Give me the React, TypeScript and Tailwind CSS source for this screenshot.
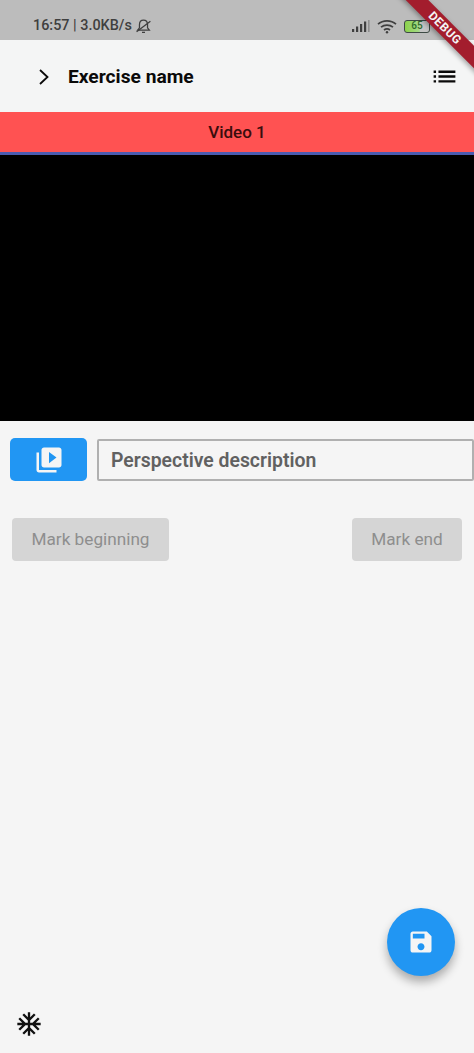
import React from 'react';

const Icon = ({ d, className }: { d: string; className: string }) => (
  <svg viewBox="0 0 24 24" fill="currentColor" className={className}>
    <path d={d} />
  </svg>
);

const LIST = 'M3 13h2v-2H3v2zm0 4h2v-2H3v2zm0-8h2V7H3v2zm4 4h14v-2H7v2zm0 4h14v-2H7v2zM7 7v2h14V7H7z';
const VIDEO_LIBRARY =
  'M4 6H2v14c0 1.1.9 2 2 2h14v-2H4V6zm16-4H8c-1.1 0-2 .9-2 2v12c0 1.1.9 2 2 2h12c1.1 0 2-.9 2-2V4c0-1.1-.9-2-2-2zm-8 12.5v-9l6 4.5-6 4.5z';
const SAVE =
  'M17 3H5c-1.11 0-2 .9-2 2v14c0 1.1.89 2 2 2h14c1.1 0 2-.9 2-2V7l-4-4zm-5 16c-1.66 0-3-1.34-3-3s1.34-3 3-3 3 1.34 3 3-1.34 3-3 3zm3-10H5V5h10v4z';
const SNOWFLAKE =
  'M22 11h-4.17l3.24-3.24-1.41-1.42L15 11h-2V9l4.66-4.66-1.42-1.41L13 6.17V2h-2v4.17L7.76 2.93 6.34 4.34 11 9v2H9L4.34 6.34 2.93 7.76 6.17 11H2v2h4.17l-3.24 3.24 1.41 1.42L9 13h2v2l-4.66 4.66 1.42 1.41L11 17.83V22h2v-4.17l3.24 3.24 1.42-1.41L13 15v-2h2l4.66 4.66 1.41-1.42L17.83 13H22z';

const StatusBar = () => (
  <div className="flex h-10 items-center bg-[#bcbcbc] pl-[33px] pr-[44px] pt-[12px] text-[#3f3f3f]">
    <span className="text-[14.4px] font-medium leading-none">16:57 | 3.0KB/s</span>
    {/* muted bell */}
    <svg viewBox="0 0 16 16" fill="none" stroke="currentColor" strokeWidth="1.2" className="ml-[3px] h-[17px] w-[17px]">
      <path d="M8 2c-2.600 0-3.800 2-3.800 4.300v3L2.500 11.500h11l-1.700-2.200v-3C11.800 4 10.600 2 8 2z" />
      <path d="M6.600 13.500h2.800M1.500 13 14.500 3" />
    </svg>
    <div className="ml-auto flex items-center">
      {/* signal */}
      <svg viewBox="0 0 18 12" className="h-3 w-[18px]" fill="currentColor">
        <rect x="0" y="9" width="2.2" height="3" />
        <rect x="4" y="6.500" width="2.2" height="5.500" />
        <rect x="8" y="4" width="2.2" height="8" />
        <rect x="12" y="1.500" width="2.2" height="10.500" />
        <rect x="16" y="0" width="1.600" height="12" fill="#8f8f8f" />
      </svg>
      {/* wifi */}
      <svg viewBox="0 0 20 15" fill="none" stroke="currentColor" strokeWidth="1.7" className="ml-[7px] h-[15px] w-5">
        <path d="M1 5.200c5-4.400 13-4.400 18 0" />
        <path d="M4 8.200c3.300-2.800 8.700-2.800 12 0" />
        <path d="M7 11c1.700-1.300 4.300-1.300 6 0" />
        <circle cx="10" cy="13.300" r="1.200" fill="currentColor" stroke="none" />
      </svg>
      {/* battery */}
      <div className="ml-[7px] flex h-[13px] w-[26px] items-center justify-center rounded-[3px] border-[1.5px] border-[#3d4a44] bg-[linear-gradient(90deg,#8bd24a_0%,#a5d98a_60%,#c4c4c4_62%)] text-[10px] font-medium leading-none text-[#2f6b2a]">
        65
      </div>
    </div>
  </div>
);

const AppBar = () => (
  <div className="flex h-[72px] items-center bg-[#f4f5f5] pl-[39px] pr-[15px] pt-[1px]">
    <svg viewBox="0 0 10 16" fill="none" stroke="#0a0a0a" strokeWidth="1.8" className="h-4 w-[10px]">
      <path d="M1 1l7.500 7L1 15" />
    </svg>
    <span className="ml-[19px] text-[19.2px] font-bold leading-none text-[#0a0a0a]">Exercise name</span>
    <Icon d={LIST} className="ml-auto h-[29px] w-[29px] text-[#0a0a0a]" />
  </div>
);

const MarkButton = ({ label, className }: { label: string; className: string }) => (
  <div
    className={`flex h-[43px] items-center justify-center rounded-[4px] bg-[#d5d5d5] text-[17.2px] text-[#8e8e8e] ${className}`}
  >
    {label}
  </div>
);

export default function App() {
  return (
    <div
      className="relative flex h-[1053px] w-[474px] flex-col overflow-hidden bg-[#f5f5f5]"
      style={{ fontFamily: 'Roboto, sans-serif' }}
    >
      <StatusBar />
      <AppBar />

      <div className="flex h-10 items-center justify-center bg-[#ff5252] text-[17px] font-medium leading-none text-[#3a0d0d]">
        Video 1
      </div>
      <div className="h-[3px] bg-[#4a5bb0]" />
      <div className="h-[266px] bg-black" />

      <div className="mt-[17px] flex h-[43px] items-center pl-[10px]">
        <div className="flex h-[43px] w-[77px] shrink-0 items-center justify-center rounded-[5px] bg-[#2196f3] text-[#f5f5f5]">
          <Icon d={VIDEO_LIBRARY} className="h-[30px] w-[30px]" />
        </div>
        <div className="ml-[10px] flex h-[42px] flex-1 items-center rounded-[2px] border-2 border-[#b0b0b0] pl-[12px] pt-[3px] text-[19.4px] font-semibold text-[#616161]">
          Perspective description
        </div>
      </div>

      <div className="mt-[37px] flex justify-between pl-3 pr-3">
        <MarkButton label="Mark beginning" className="w-[157px]" />
        <MarkButton label="Mark end" className="w-[110px]" />
      </div>

      <div className="mt-auto pb-[15px] pl-[15px]">
        <Icon d={SNOWFLAKE} className="h-7 w-7 text-[#111111]" />
      </div>

      {/* floating save button */}
      <div className="absolute left-[387px] top-[908px] flex h-[68px] w-[68px] items-center justify-center rounded-full bg-[#2196f3] text-[#f5f5f5] shadow-[0_6px_10px_rgba(0,0,0,0.3)]">
        <Icon d={SAVE} className="h-7 w-7" />
      </div>

      {/* debug ribbon */}
      <div className="absolute left-[385px] top-[20px] flex h-[16px] w-[120px] rotate-45 items-center justify-center bg-[#a31d2d] text-[12px] font-bold tracking-[0.5px] text-[#f5f5f5] shadow-[0_2px_5px_rgba(0,0,0,0.35)]">
        DEBUG
      </div>
    </div>
  );
}
